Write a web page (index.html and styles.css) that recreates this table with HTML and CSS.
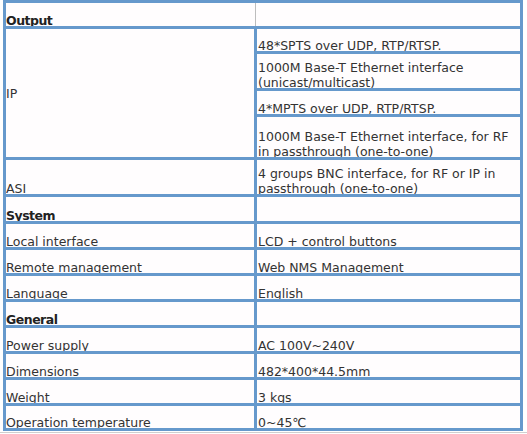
FILE: index.html
```html
<!DOCTYPE html>
<html>
<head>
<meta charset="utf-8">
<link rel="stylesheet" href="styles.css">
</head>
<body>
<div class="page">
  <div class="spec">
    <div class="c head"><p>Output</p></div>
    <div class="c v head-blank"></div>

    <div class="c ip"><p>IP</p></div>
    <div class="c v"><p>48*SPTS over UDP, RTP/RTSP.</p></div>
    <div class="c v"><p>1000M Base-T Ethernet interface (unicast/multicast)</p></div>
    <div class="c v"><p>4*MPTS over UDP, RTP/RTSP.</p></div>
    <div class="c v"><p>1000M Base-T Ethernet interface, for RF in passthrough (one-to-one)</p></div>

    <div class="c"><p>ASI</p></div>
    <div class="c v"><p>4 groups BNC interface, for RF or IP in passthrough (one-to-one)</p></div>

    <div class="c head"><p>System</p></div>
    <div class="c v"></div>

    <div class="c"><p>Local interface</p></div>
    <div class="c v"><p>LCD + control buttons</p></div>

    <div class="c"><p>Remote management</p></div>
    <div class="c v"><p>Web NMS Management</p></div>

    <div class="c"><p>Language</p></div>
    <div class="c v"><p>English</p></div>

    <div class="c head"><p>General</p></div>
    <div class="c v"></div>

    <div class="c"><p>Power supply</p></div>
    <div class="c v"><p>AC 100V~240V</p></div>

    <div class="c"><p>Dimensions</p></div>
    <div class="c v"><p>482*400*44.5mm</p></div>

    <div class="c"><p>Weight</p></div>
    <div class="c v"><p>3 kgs</p></div>

    <div class="c"><p>Operation temperature</p></div>
    <div class="c v"><p>0~45℃</p></div>
  </div>
  <div class="rule"></div>
</div>
</body>
</html>
```

FILE: styles.css
```css
html, body {
  margin: 0;
  padding: 0;
  background: #ffffff;
}

.page {
  width: 527px;
  font-family: "DejaVu Sans", Verdana, sans-serif;
  font-size: 12.5px;
  color: #333333;
}

.spec {
  margin-left: 3px;
  width: max-content;
  display: grid;
  grid-template-columns: 251px 266px;
  grid-template-rows: 26px 25px 37px 26px 43px 37px 27px 26px 26px 26px 26px 26px 26px 26px 25px;
  border-right: 3px solid #6699cc;
  border-bottom: 3px solid #6699cc;
  background: #fffdfe;
}

.c {
  box-sizing: border-box;
  border-top: 3px solid #6699cc;
  border-left: 3px solid #6699cc;
  display: flex;
  flex-direction: column;
  justify-content: flex-end;
  overflow: hidden;
  padding-left: 0;
}

.c p {
  margin: 0 0 -2px 0;
  line-height: 15px;
}

.c.v {
  padding-left: 1px;
}

.c.ip {
  grid-row: span 4;
  justify-content: center;
}

.c.ip p {
  margin: 0;
}

.c.head p {
  font-weight: bold;
  letter-spacing: -0.5px;
  color: #222222;
}

.c.head-blank {
  border-left: 0;
  box-shadow: inset 1px 0 0 #fffdfe, inset 2px 0 0 #bdbdbd;
}

.rule {
  margin-top: 1px;
  height: 1px;
  background: #cfcfcf;
}
```
